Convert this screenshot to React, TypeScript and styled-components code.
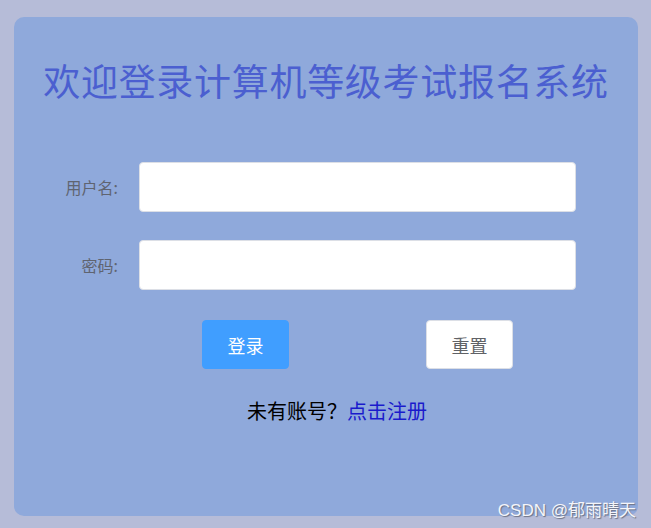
import React from "react";
import styled, { createGlobalStyle } from "styled-components";

const Global = createGlobalStyle`
  html, body { margin: 0; padding: 0; }
  body {
    background: #b6bcd8;
    font-family: "Noto Sans CJK SC", "Liberation Sans", sans-serif;
  }
`;

const Page = styled.div`
  position: relative;
  width: 651px;
  height: 528px;
  box-sizing: border-box;
  padding: 17px 13px 12px 14px;
  background: #b6bcd8;
`;

const Card = styled.div`
  width: 624px;
  height: 499px;
  box-sizing: border-box;
  border-radius: 10px;
  background: #8fa9db;
  display: flex;
  flex-direction: column;
  padding-top: 45px;
`;

const Title = styled.h1`
  margin: 0;
  font-size: 37px;
  line-height: 36px;
  letter-spacing: 0.7px;
  font-weight: 400;
  color: #4b5fd0;
  text-align: center;
`;

const Form = styled.form`
  display: flex;
  flex-direction: column;
  gap: 28px;
  margin-top: 64px;
`;

const FieldRow = styled.div`
  display: flex;
  align-items: center;
`;

const Label = styled.label`
  width: 125px;
  box-sizing: border-box;
  padding-right: 21px;
  text-align: right;
  font-size: 16px;
  color: #5f6470;
`;

const Input = styled.input`
  width: 437px;
  height: 50px;
  box-sizing: border-box;
  border: 1px solid #dcdfe6;
  border-radius: 4px;
  background: #fff;
  outline: none;
  padding: 0 15px;
  font-size: 16px;
`;

const ButtonRow = styled.div`
  display: flex;
  gap: 137px;
  padding-left: 188px;
  margin-top: 2px;
`;

const Button = styled.button<{ $primary?: boolean }>`
  width: 87px;
  height: 49px;
  box-sizing: border-box;
  border-radius: 4px;
  border: 1px solid ${(p) => (p.$primary ? "#409eff" : "#dcdfe6")};
  background: ${(p) => (p.$primary ? "#409eff" : "#ffffff")};
  color: ${(p) => (p.$primary ? "#ffffff" : "#606266")};
  font-family: "Noto Sans CJK SC", sans-serif;
  font-size: 18px;
  padding: 0;
  cursor: pointer;
`;

const RegisterLine = styled.div`
  margin-top: 27px;
  padding-left: 233px;
  font-size: 20px;
  line-height: 30px;
  color: #000;
`;

const RegisterLink = styled.a`
  color: #1a1acc;
  text-decoration: none;
`;

const Watermark = styled.div`
  position: absolute;
  right: 15px;
  bottom: 6px;
  font-family: "Liberation Sans", "Noto Sans CJK SC", sans-serif;
  font-size: 17px;
  line-height: 22px;
  color: #f4f5fa;
  text-shadow: 1px 1px 1px #6c7080;
`;

export default function App() {
  return (
    <>
      <Global />
      <Page>
        <Card>
          <Title>欢迎登录计算机等级考试报名系统</Title>
          <Form onSubmit={(e) => e.preventDefault()}>
            <FieldRow>
              <Label>用户名:</Label>
              <Input type="text" />
            </FieldRow>
            <FieldRow>
              <Label>密码:</Label>
              <Input type="password" />
            </FieldRow>
            <ButtonRow>
              <Button type="button" $primary>登录</Button>
              <Button type="button">重置</Button>
            </ButtonRow>
          </Form>
          <RegisterLine>
            未有账号？<RegisterLink href="#">点击注册</RegisterLink>
          </RegisterLine>
        </Card>
        <Watermark>CSDN @郁雨晴天</Watermark>
      </Page>
    </>
  );
}
